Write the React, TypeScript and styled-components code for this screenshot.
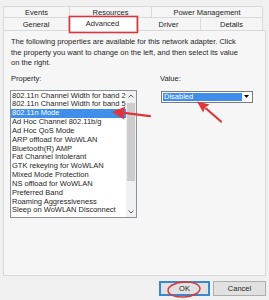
import styled, { createGlobalStyle } from "styled-components";

const GlobalStyle = createGlobalStyle`
  html, body {
    margin: 0;
    padding: 0;
    background: #f0f0f0;
  }
  body {
    font-family: "Liberation Sans", Arial, sans-serif;
  }
`;

const Dialog = styled.div`
  position: relative;
  width: 269px;
  height: 300px;
  box-sizing: border-box;
  padding: 6px 3px 0 3px;
  background: #f0f0f0;
  color: #1e1e1e;
  font-size: 7.5px;
  overflow: hidden;
  display: flex;
  flex-direction: column;
`;

const TabRow = styled.div<{ $h: number }>`
  display: flex;
  height: ${p => p.$h}px;
  position: relative;
`;

const Tab = styled.div<{ $w: number; $active?: boolean }>`
  width: ${p => p.$w}px;
  box-sizing: border-box;
  border: 1px solid #d9d9d9;
  border-bottom: none;
  margin-left: -1px;
  &:first-child {
    margin-left: 0;
  }
  background: ${p => (p.$active ? "#ffffff" : "#f5f5f5")};
  display: flex;
  align-items: ${p => (p.$active ? "flex-start" : "center")};
  padding-top: ${p => (p.$active ? "2px" : "0")};
  justify-content: center;
  white-space: nowrap;
  ${p =>
    p.$active &&
    `
    margin-top: -1px;
    margin-bottom: -1px;
    position: relative;
    z-index: 1;
  `}
`;

const Panel = styled.div`
  height: 246px;
  box-sizing: border-box;
  border: 1px solid #d9d9d9;
  background: #f6f6f6;
  padding: 6px 7px;
`;

const Description = styled.p`
  margin: 0;
  line-height: 10.5px;
  white-space: nowrap;
`;

const Fields = styled.div`
  display: grid;
  grid-template-columns: 126px 93px;
  column-gap: 23px;
  margin-top: 5px;
`;

const Label = styled.div`
  line-height: 10px;
  height: 10px;
`;

const ListBox = styled.div`
  margin: 6px 0 0 -1px;
  width: 127px;
  height: 128px;
  box-sizing: border-box;
  border: 1px solid #8a8f98;
  background: #ffffff;
  display: flex;
`;

const Items = styled.div`
  flex: 1;
  padding-top: 1px;
  overflow: hidden;
`;

const Item = styled.div<{ $selected?: boolean }>`
  height: 8.85px;
  line-height: 8.85px;
  padding-left: 1px;
  white-space: nowrap;
  background: ${p => (p.$selected ? "#3f8ee9" : "transparent")};
  color: ${p => (p.$selected ? "#ffffff" : "#1e1e1e")};
`;

const ScrollBar = styled.div`
  width: 10px;
  background: #f0f0f0;
  display: flex;
  flex-direction: column;
`;

const ScrollArrow = styled.div`
  height: 10px;
  display: flex;
  align-items: center;
  justify-content: center;
`;

const Track = styled.div`
  flex: 1;
  padding: 2px 1px 0 1px;
`;

const Thumb = styled.div`
  height: 78px;
  background: #cdcdcd;
`;

const Combo = styled.div`
  margin: 7px 0 0 1px;
  width: 92px;
  height: 12px;
  box-sizing: border-box;
  border: 1px solid #7a7a7a;
  background: #ffffff;
  display: flex;
  padding: 1px;
`;

const ComboValue = styled.div`
  flex: 1;
  background: #3f8ee9;
  color: #ffffff;
  line-height: 8px;
  padding-left: 1px;
`;

const ComboArrow = styled.div`
  width: 9px;
  display: flex;
  align-items: center;
  justify-content: center;
`;

const ButtonRow = styled.div`
  display: flex;
  justify-content: flex-end;
  gap: 3px;
  margin-top: 5px;
`;

const Button = styled.div<{ $w: number; $default?: boolean }>`
  width: ${p => p.$w}px;
  height: 15px;
  box-sizing: border-box;
  border: ${p => (p.$default ? "2px solid #3c86cc" : "1px solid #adadad")};
  background: #e1e1e1;
  display: flex;
  align-items: center;
  justify-content: center;
`;

const Marks = styled.svg`
  position: absolute;
  left: 0;
  top: 0;
  pointer-events: none;
  z-index: 5;
`;

const properties = [
  "802.11n Channel Width for band 2",
  "802.11n Channel Width for band 5",
  "802.11n Mode",
  "Ad Hoc Channel 802.11b/g",
  "Ad Hoc QoS Mode",
  "ARP offload for WoWLAN",
  "Bluetooth(R) AMP",
  "Fat Channel Intolerant",
  "GTK rekeying for WoWLAN",
  "Mixed Mode Protection",
  "NS offload for WoWLAN",
  "Preferred Band",
  "Roaming Aggressiveness",
  "Sleep on WoWLAN Disconnect",
];

function Chevron({ up }: { up?: boolean }) {
  return (
    <svg width="6" height="4" viewBox="0 0 6 4">
      <path
        d={up ? "M0.5 3.5 L3 1 L5.5 3.5" : "M0.5 0.5 L3 3 L5.5 0.5"}
        fill="none"
        stroke="#606060"
        strokeWidth="1"
      />
    </svg>
  );
}

function App() {
  return (
    <>
      <GlobalStyle />
      <Dialog>
        <TabRow $h={11}>
          <Tab $w={67}>Events</Tab>
          <Tab $w={83}>Resources</Tab>
          <Tab $w={112}>Power Management</Tab>
        </TabRow>
        <TabRow $h={13}>
          <Tab $w={66}>General</Tab>
          <Tab $w={69} $active>Advanced</Tab>
          <Tab $w={65}>Driver</Tab>
          <Tab $w={63}>Details</Tab>
        </TabRow>
        <Panel>
          <Description>
            The following properties are available for this network adapter. Click
            <br />
            the property you want to change on the left, and then select its value
            <br />
            on the right.
          </Description>
          <Fields>
            <div>
              <Label>Property:</Label>
              <ListBox>
                <Items>
                  {properties.map(name => (
                    <Item key={name} $selected={name === "802.11n Mode"}>
                      {name}
                    </Item>
                  ))}
                </Items>
                <ScrollBar>
                  <ScrollArrow>
                    <Chevron up />
                  </ScrollArrow>
                  <Track>
                    <Thumb />
                  </Track>
                  <ScrollArrow>
                    <Chevron />
                  </ScrollArrow>
                </ScrollBar>
              </ListBox>
            </div>
            <div>
              <Label>Value:</Label>
              <Combo>
                <ComboValue>Disabled</ComboValue>
                <ComboArrow>
                  <svg width="5" height="3" viewBox="0 0 5 3">
                    <path d="M0 0 H5 L2.5 3 Z" fill="#000" />
                  </svg>
                </ComboArrow>
              </Combo>
            </div>
          </Fields>
        </Panel>
        <ButtonRow>
          <Button $w={51} $default>OK</Button>
          <Button $w={53}>Cancel</Button>
        </ButtonRow>
        <Marks width="269" height="300" viewBox="0 0 269 300">
          <rect x="69.5" y="16.5" width="68" height="16" fill="none" stroke="#d6373d" strokeWidth="1.6" />
          <path d="M124 112.8 L150 116.2" stroke="#e0353b" strokeWidth="2.2" strokeLinecap="round" />
          <path d="M112 112 L125.6 106.6 L123.4 112.9 L124.4 119.4 Z" fill="#e0353b" />
          <path d="M206 108.5 L221 121.5" stroke="#e0353b" strokeWidth="2.2" strokeLinecap="round" />
          <path d="M197 101.5 L209.6 104.6 L205 107.6 L203.2 112.6 Z" fill="#e0353b" />
          <ellipse cx="184" cy="289.5" rx="16" ry="7.5" fill="none" stroke="#d6373d" strokeWidth="1.5" transform="rotate(-4 184 289.5)" />
        </Marks>
      </Dialog>
    </>
  );
}

export default App;
